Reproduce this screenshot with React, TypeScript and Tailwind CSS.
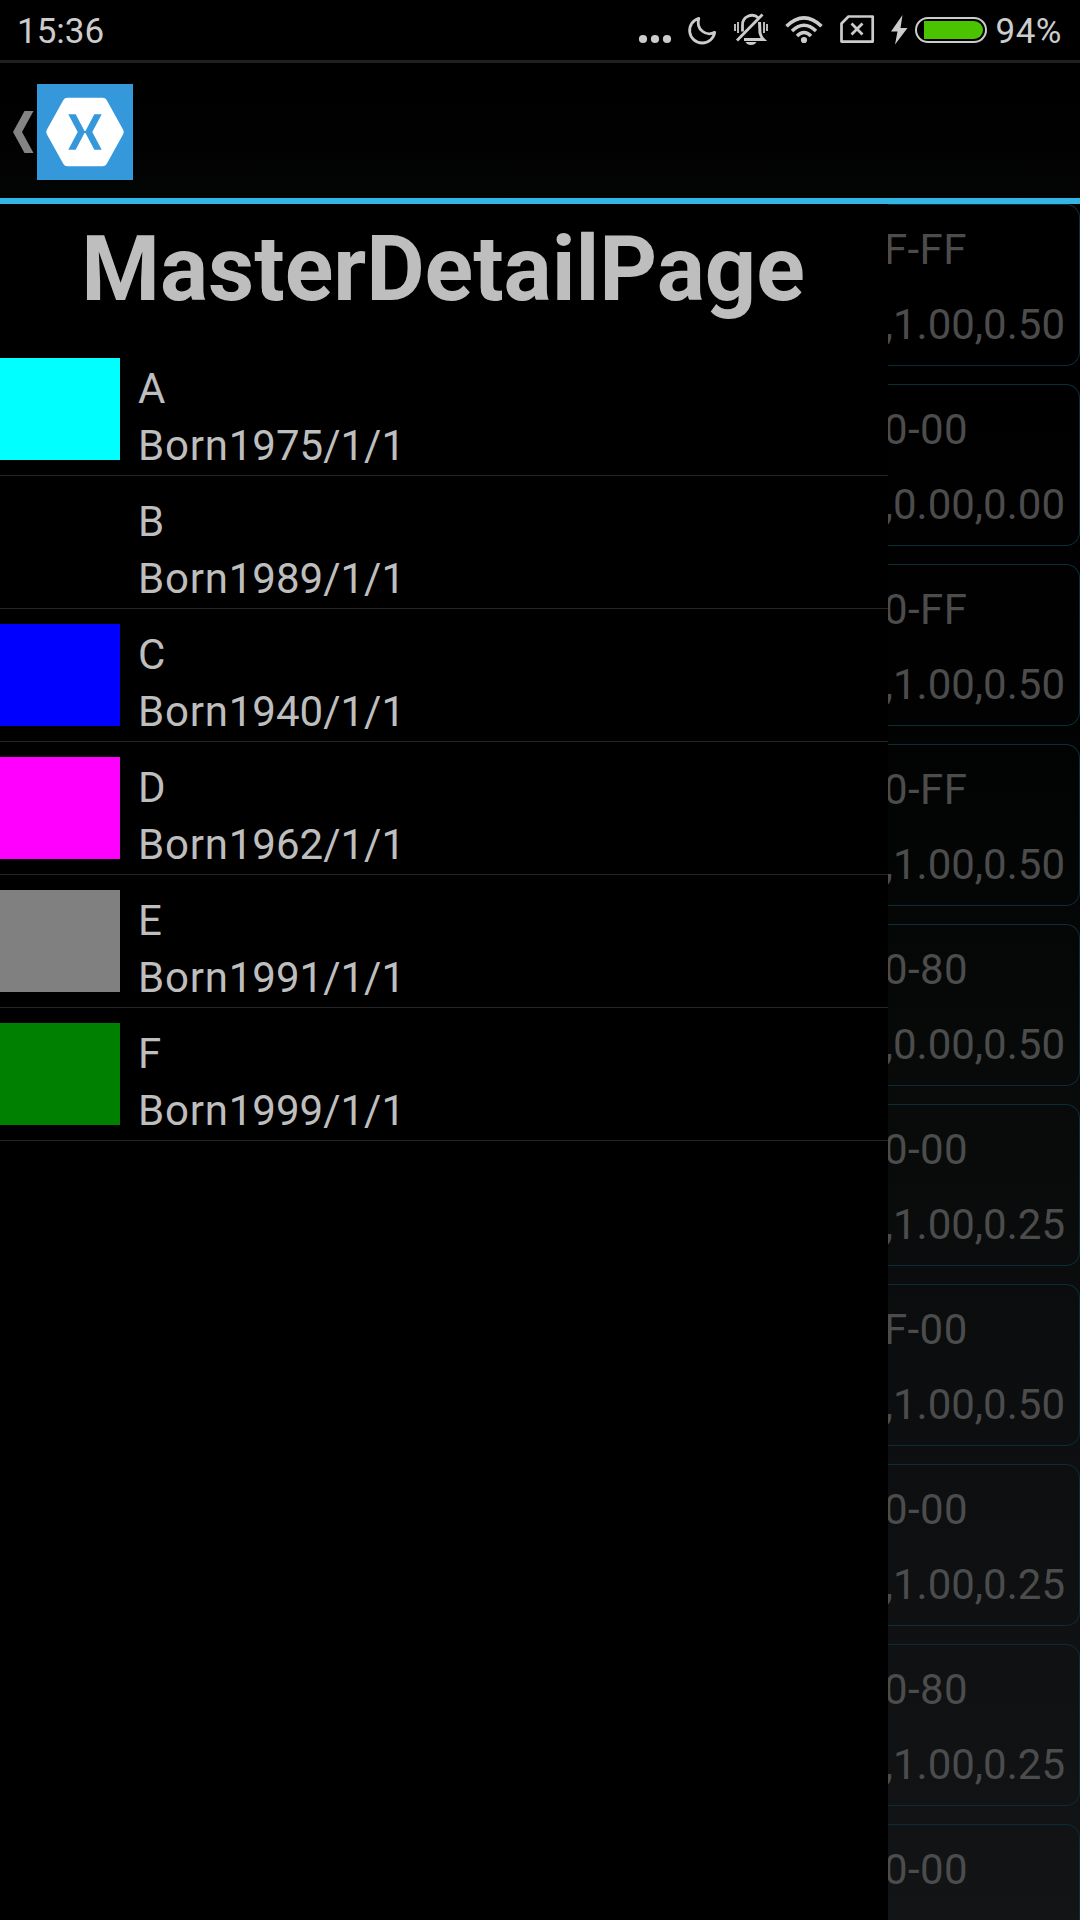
import React from 'react';

const PEOPLE = [
  { name: 'A', born: '1975/1/1', color: 'bg-[#00ffff]' },
  { name: 'B', born: '1989/1/1', color: 'bg-black' },
  { name: 'C', born: '1940/1/1', color: 'bg-[#0000ff]' },
  { name: 'D', born: '1962/1/1', color: 'bg-[#ff00ff]' },
  { name: 'E', born: '1991/1/1', color: 'bg-[#808080]' },
  { name: 'F', born: '1999/1/1', color: 'bg-[#008000]' },
];

const COLORS = [
  { hex: 'F-FF', hsl: ',1.00,0.50' },
  { hex: '0-00', hsl: ',0.00,0.00' },
  { hex: '0-FF', hsl: ',1.00,0.50' },
  { hex: '0-FF', hsl: ',1.00,0.50' },
  { hex: '0-80', hsl: ',0.00,0.50' },
  { hex: '0-00', hsl: ',1.00,0.25' },
  { hex: 'F-00', hsl: ',1.00,0.50' },
  { hex: '0-00', hsl: ',1.00,0.25' },
  { hex: '0-80', hsl: ',1.00,0.25' },
  { hex: '0-00', hsl: ',0.00,0.50' },
];

const StatusBar = () => (
  <header className="h-[63px] shrink-0 bg-black border-b-[3px] border-[#1f1f1f] flex items-center justify-between pl-[17px] pr-[18px] text-[#cccccc]">
    <span className="text-[35px] leading-[60px] pt-[3px]">15:36</span>
    <div className="flex items-center">
      {/* more notifications */}
      <svg width="45" height="60" viewBox="0 0 45 60" fill="currentColor">
        <circle cx="8" cy="39" r="4.1" />
        <circle cx="20" cy="39" r="4.1" />
        <circle cx="32" cy="39" r="4.1" />
      </svg>
      {/* do not disturb */}
      <svg width="50" height="60" viewBox="0 0 50 60" fill="none" stroke="currentColor">
        <path
          d="M18.8 18.3A12.6 12.6 0 1 0 34.7 32.3C26.5 37 15.5 29.5 18.8 18.3z"
          strokeWidth="2.8"
          strokeLinejoin="round"
        />
      </svg>
      {/* muted bell */}
      <svg width="54" height="60" viewBox="0 0 54 60" fill="none" stroke="currentColor">
        <path d="M5 24v7M8 22v11M34 22v11M37 24v7" strokeWidth="1.8" />
        <path d="M12.5 31.500v-6a9.500 9.500 0 0 1 16-7.500" strokeWidth="2.8" />
        <path d="M7 40.500L32.500 14.500" strokeWidth="2.8" />
        <path d="M29.500 22l.5 11q1 4 3.500 6.500H14" strokeWidth="3" />
        <path d="M15.500 42h11q-1.500 3-5.500 3t-5.500-3z" fill="currentColor" stroke="none" />
      </svg>
      {/* wifi */}
      <svg width="55" height="60" viewBox="0 0 55 60" fill="none" stroke="currentColor">
        <path d="M2.500 26.200Q20 9.500 37.500 26.200" strokeWidth="3.600" />
        <path d="M8 31Q20 19.500 32 31" strokeWidth="3.500" />
        <path d="M13 36Q20 29 27 36" strokeWidth="3.500" />
        <circle cx="20" cy="40" r="3.100" fill="currentColor" stroke="none" />
      </svg>
      {/* no sim */}
      <svg width="50" height="60" viewBox="0 0 50 60" fill="none" stroke="currentColor">
        <path d="M2.500 23.500L9.500 16.500H33.700V41.600H2.500z" strokeWidth="2.700" strokeLinejoin="round" />
        <path d="M12.500 23.500l11 11M23.500 23.500l-11 11" strokeWidth="2.800" />
      </svg>
      {/* charging */}
      <svg width="26" height="60" viewBox="0 0 26 60" fill="currentColor">
        <path d="M13.500 15L2 31.500h6.500L6 44.500L18.500 28H11.500z" />
      </svg>
      <svg width="81" height="60" viewBox="0 0 81 60">
        <rect x="1" y="18" width="70" height="24" rx="12" fill="none" stroke="currentColor" strokeWidth="2" />
        <path d="M9 21H59a9 9 0 0 1 0 18H9z" fill="#4ac400" />
      </svg>
      <span className="text-[35px] leading-[60px] tracking-[0.5px] pt-[3px]">94%</span>
    </div>
  </header>
);

const ActionBar = () => (
  <nav className="h-[141px] shrink-0 border-b-[6px] border-[#33b5e5] flex items-center pl-[13px] pt-[3px] bg-gradient-to-b from-black to-[#040605]">
    <svg width="21" height="42" viewBox="0 0 21 42" fill="#848484">
      <path d="M0 21L11.500 0H20.500L9 21L20.500 42H11.500z" />
    </svg>
    <div className="w-24 h-24 ml-[3px] bg-[#3498db]">
      <svg width="96" height="96" viewBox="0 0 96 96">
        <path
          d="M13.800 48L30.300 18.200H65.700L82.200 48L65.700 77.800H30.300z"
          fill="#fff"
          stroke="#fff"
          strokeWidth="9"
          strokeLinejoin="round"
        />
        <path
          d="M31.300 30.300H38.700L47.500 47H48.500L57.300 30.300H64.700L55.300 48L64.700 65.700H57.300L48.500 49H47.500L38.700 65.700H31.300L40.700 48z"
          fill="#3498db"
        />
      </svg>
    </div>
  </nav>
);

const PersonRow = ({ name, born, color }: any) => (
  <li className="h-[133px] border-b border-[#262626] flex pt-[15px]">
    <div className={`w-[120px] h-[102px] ${color}`}></div>
    <div className="pt-0.5 pl-[18px] text-[42px] leading-[57px] text-[#bebebe]">
      <p>{name}</p>
      <p>
        <span className="tracking-[0.8px]">Born</span>
        {born}
      </p>
    </div>
  </li>
);

const ColorCard = ({ hex, hsl }: any) => (
  <li className="h-[162px] shrink-0 border border-l-0 border-[#0b2c38] rounded-r-[14px] text-[42px] leading-[75px] text-[#4c4c4c] whitespace-nowrap">
    <p className="-ml-1 pt-[7px] tracking-[0.4px]">{hex}</p>
    <p className="flex justify-end pr-[14px]">{hsl}</p>
  </li>
);

export default function App() {
  return (
    <div className="w-[1080px] h-[1920px] bg-black flex flex-col overflow-hidden font-['Roboto',sans-serif]">
      <StatusBar />
      <ActionBar />
      <div className="flex flex-1 min-h-0">
        {/* Master */}
        <aside className="w-[888px] bg-black">
          <h1 className="h-[139px] pt-[13px] pr-[2px] text-center text-[90px] leading-[106px] tracking-[-0.05px] font-bold text-[#bebebe]">
            MasterDetailPage
          </h1>
          <ul>
            {PEOPLE.map((person) => (
              <PersonRow key={person.name} {...person} />
            ))}
          </ul>
        </aside>

        {/* Detail, dimmed behind the drawer */}
        <main className="flex-1 min-w-0 overflow-hidden bg-gradient-to-b from-black via-[#080a0a] to-[#121416]">
          <ul className="flex flex-col gap-[18px]">
            {COLORS.map((item, i) => (
              <ColorCard key={i} {...item} />
            ))}
          </ul>
        </main>
      </div>
    </div>
  );
}
